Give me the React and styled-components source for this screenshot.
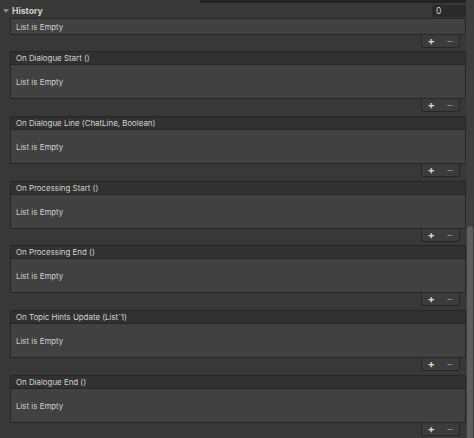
import React from "react";
import styled, { createGlobalStyle } from "styled-components";

const GlobalStyle = createGlobalStyle`
  html, body {
    margin: 0;
    padding: 0;
    background: #383838;
  }
  body {
    font-family: Inter, "Noto Sans", "Liberation Sans", sans-serif;
  }
`;

const events = [
  { name: "On Dialogue Start ()", gap: 4 },
  { name: "On Dialogue Line (ChatLine, Boolean)", gap: 4 },
  { name: "On Processing Start ()", gap: 3 },
  { name: "On Processing End ()", gap: 4 },
  { name: "On Topic Hints Update (List`1)", gap: 4 },
  { name: "On Dialogue End ()", gap: 0 },
];

const ListFooter = () => (
  <Footer>
    <FooterBox>
      <Plus>+</Plus>
      <Minus>−</Minus>
    </FooterBox>
  </Footer>
);

const App = () => {
  return (
    <>
      <GlobalStyle />
      <Page>
        <Content>
          <TopStrip />
          <HistoryRow>
            <Foldout />
            <Label>History</Label>
            <SizeField>0</SizeField>
          </HistoryRow>
          <ListBlock gap={3}>
            <Body small>List is Empty</Body>
            <ListFooter />
          </ListBlock>
          {events.map((ev, i) => (
            <ListBlock key={i} gap={ev.gap}>
              <Header>{ev.name}</Header>
              <Body>List is Empty</Body>
              <ListFooter />
            </ListBlock>
          ))}
        </Content>
        <ScrollTrack>
          <ScrollThumb />
        </ScrollTrack>
      </Page>
    </>
  );
};

const Page = styled.div`
  display: flex;
  width: 474px;
  height: 438px;
  overflow: hidden;
  background: #383838;
`;

const Content = styled.div`
  flex: 1;
  display: flex;
  flex-direction: column;
  & > * {
    flex-shrink: 0;
  }
`;

const TopStrip = styled.div`
  height: 3px;
  margin-left: 200px;
  margin-right: -8px;
  background: #232323;
`;

const HistoryRow = styled.div`
  display: flex;
  align-items: center;
  height: 15px;
  padding-left: 3px;
`;

const Foldout = styled.div`
  width: 0;
  height: 0;
  border-left: 3px solid transparent;
  border-right: 3px solid transparent;
  border-top: 4px solid #8a8a8a;
  margin-right: 3px;
`;

const Label = styled.span`
  flex: 1;
  font-size: 8.6px;
  font-weight: 700;
  color: #d2d2d2;
`;

const SizeField = styled.div`
  width: 30px;
  height: 12px;
  padding-left: 4px;
  background: #2a2a2a;
  border-radius: 2px;
  font-size: 8.5px;
  line-height: 12px;
  color: #d2d2d2;
`;

const ListBlock = styled.div`
  display: flex;
  flex-direction: column;
  margin-left: 10px;
  margin-bottom: ${(p) => p.gap}px;
`;

const Header = styled.div`
  height: 12px;
  padding-left: 5px;
  background: #313131;
  border: 1px solid #262626;
  border-bottom: none;
  border-radius: 2px 2px 0 0;
  font-size: 7.9px;
  line-height: 12px;
  color: #d4d4d4;
`;

const Body = styled.div`
  display: flex;
  align-items: center;
  height: ${(p) => (p.small ? "15px" : "33px")};
  padding-left: 5px;
  background: #414141;
  border: 1px solid #262626;
  font-size: 7.9px;
  color: #d0d0d0;
`;

const Footer = styled.div`
  display: flex;
  justify-content: flex-end;
  height: 13px;
  padding-right: 6px;
`;

const FooterBox = styled.div`
  display: flex;
  align-items: center;
  justify-content: space-around;
  width: 37px;
  height: 12px;
  background: #3c3c3c;
  border: 1px solid #262626;
  border-top: none;
  border-radius: 0 0 3px 3px;
`;

const Plus = styled.span`
  font-size: 11px;
  font-weight: 600;
  line-height: 12px;
  color: #dcdcdc;
`;

const Minus = styled.span`
  font-size: 11px;
  line-height: 12px;
  color: #8a8a8a;
`;

const ScrollTrack = styled.div`
  width: 8px;
  display: flex;
  flex-direction: column;
  background: #3e3e3e;
`;

const ScrollThumb = styled.div`
  margin-top: 226px;
  margin-left: 1px;
  width: 6px;
  flex: 1;
  background: #5f5f5f;
  border-radius: 3px 3px 0 0;
`;

export default App;
